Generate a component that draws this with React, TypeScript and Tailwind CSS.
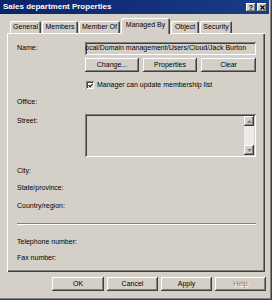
import React from "react";

const raised =
  "bg-[#d4d0c8] shadow-[inset_-1px_-1px_#404040,inset_1px_1px_#ffffff,inset_-2px_-2px_#808080]";
const sunken =
  "shadow-[inset_1px_1px_#808080,inset_-1px_-1px_#ffffff,inset_2px_2px_#404040,inset_-2px_-2px_#d4d0c8]";

const font = { fontFamily: '"Liberation Sans", Arial, sans-serif' };

function Btn({ label, w, disabled }: { label: string; w: number; disabled?: boolean }) {
  return (
    <div
      className={`${raised} h-[14px] flex items-center justify-center text-[7px] ${
        disabled ? "text-[#808080] [text-shadow:1px_1px_#ffffff]" : "text-black"
      }`}
      style={{ width: w }}
    >
      {label}
    </div>
  );
}

function Tab({ label, w, active }: { label: string; w: number; active?: boolean }) {
  return (
    <div
      className={`flex items-center justify-center text-[7px] text-black bg-[#d4d0c8] rounded-t-[2px] shadow-[inset_1px_1px_#ffffff,inset_-1px_0_#404040,inset_-2px_0_#808080] ${
        active ? "h-[16px] relative z-10 -mb-[1px] pb-[2px]" : "h-[12px]"
      }`}
      style={{ width: w }}
    >
      {label}
    </div>
  );
}

function Row({ label, mt, h = 10 }: { label: string; mt: number; h?: number }) {
  return (
    <div className="flex items-center pl-[10px] text-[7px] text-black" style={{ marginTop: mt, height: h }}>
      {label}
    </div>
  );
}

function Arrow({ up }: { up?: boolean }) {
  return (
    <div className={`${raised} w-[10px] h-[10px] flex items-center justify-center`}>
      <svg width="5" height="3" viewBox="0 0 5 3">
        {up ? <polygon points="2.5,0 5,3 0,3" fill="#808080" /> : <polygon points="0,0 5,0 2.5,3" fill="#808080" />}
      </svg>
    </div>
  );
}

export default function App() {
  return (
    <div
      className="w-[272px] h-[300px] bg-[#d4d0c8] flex flex-col overflow-hidden shadow-[inset_-1px_-1px_#404040,inset_-2px_-2px_#808080]"
      style={font}
    >
      {/* title bar */}
      <div className="w-[269px] h-[14px] bg-gradient-to-r from-[#0a246a] to-[#1a3c86] flex items-center justify-between pl-[3px] pr-[2px]">
        <span className="text-white font-bold text-[8px] leading-none">Sales department Properties</span>
        <div className="flex gap-[1px]">
          <div className={`${raised} w-[10px] h-[9px] flex items-center justify-center text-[7px] font-bold leading-none`}>?</div>
          <div className={`${raised} w-[10px] h-[9px] flex items-center justify-center`}>
            <svg width="5" height="5" viewBox="0 0 5 5">
              <path d="M0.5 0.5L4.5 4.5M4.5 0.5L0.5 4.5" stroke="#000" strokeWidth="1.2" />
            </svg>
          </div>
        </div>
      </div>

      {/* tabs */}
      <div className="flex items-end gap-[1px] ml-[10px] mt-[4px] h-[15px]">
        <Tab label="General" w={31} />
        <Tab label="Members" w={36} />
        <Tab label="Member Of" w={41} />
        <Tab label="Managed By" w={49} active />
        <Tab label="Object" w={28} />
        <Tab label="Security" w={32} />
      </div>

      {/* panel */}
      <div className="ml-[7px] w-[258px] h-[239px] flex flex-col shadow-[inset_1px_1px_#ffffff,inset_-1px_-1px_#404040,inset_-2px_-2px_#808080] pr-[9px]">
        <div className="flex items-center mt-[9px] h-[13px]">
          <div className="w-[78px] pl-[10px] text-[7px]">Name:</div>
          <div className={`${sunken} w-[171px] h-[13px] overflow-hidden flex items-center pl-[2px] text-[7px] whitespace-nowrap`}>
            <span className="-ml-[2px]">ocal/Domain management/Users/Cloud/Jack Burton</span>
          </div>
        </div>

        <div className="flex ml-[78px] mt-[3px] gap-[4px]">
          <Btn label="Change..." w={54} />
          <Btn label="Properties" w={54} />
          <Btn label="Clear" w={55} />
        </div>

        <div className="flex items-center ml-[79px] mt-[8px] h-[10px] gap-[3px] text-[7px]">
          <div className={`${sunken} bg-white w-[8px] h-[8px] flex items-center justify-center`}>
            <svg width="5" height="5" viewBox="0 0 5 5">
              <path d="M0.5 2.2L2 3.7L4.5 1" stroke="#000" strokeWidth="1.1" fill="none" />
            </svg>
          </div>
          <span>Manager can update membership list</span>
        </div>

        <Row label="Office:" mt={7} />

        <div className="flex mt-[7px] h-[43px]">
          <div className="w-[78px] pl-[10px] pt-[2px] text-[7px]">Street:</div>
          <div className={`${sunken} flex-1 h-[43px] flex justify-end p-[2px]`}>
            <div className="w-[10px] flex flex-col bg-[#eceae6]">
              <Arrow up />
              <div className="flex-1" />
              <Arrow />
            </div>
          </div>
        </div>

        <Row label="City:" mt={9} />
        <Row label="State/province:" mt={7} />
        <Row label="Country/region:" mt={8} />

        <div className="ml-[10px] mt-[12px] h-[2px] border-t border-[#808080] border-b border-b-white" />

        <Row label="Telephone number:" mt={12} />
        <Row label="Fax number:" mt={6} />
      </div>

      {/* bottom buttons */}
      <div className="flex justify-end gap-[3px] mt-[5px] pr-[6px]">
        <Btn label="OK" w={52} />
        <Btn label="Cancel" w={51} />
        <Btn label="Apply" w={51} />
        <Btn label="Help" w={51} disabled />
      </div>
    </div>
  );
}
